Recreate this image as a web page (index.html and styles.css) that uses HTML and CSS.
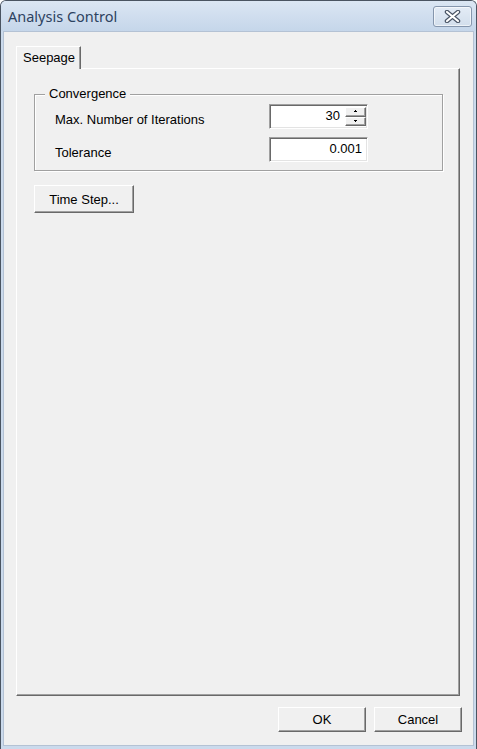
FILE: index.html
```html
<!DOCTYPE html>
<html lang="en">
    <head>
        <meta charset="UTF-8">
        <title>Analysis Control</title>
        <link rel="stylesheet" href="styles.css">
    </head>
    <body>

        <div class="window">
            <div class="titlebar">
                <span class="title">Analysis Control</span>
                <div class="close-button">
                    <svg width="17" height="13" viewBox="0 0 17 13">
                        <path d="M3 2 L14 11 M14 2 L3 11" stroke="#4a5566" stroke-width="4.5" stroke-linecap="round"/>
                        <path d="M3 2 L14 11 M14 2 L3 11" stroke="#ffffff" stroke-width="2.2" stroke-linecap="round"/>
                    </svg>
                </div>
            </div>

            <div class="client">
                <div class="tabs">
                    <div class="tab">Seepage</div>
                </div>

                <div class="tab-panel">
                    <div class="group">
                        <span class="group-title">Convergence</span>
                        <div class="group-rows">
                            <div class="row">
                                <span class="row-label">Max. Number of Iterations</span>
                                <div class="edit">
                                    <span class="edit-value">30</span>
                                    <div class="spinner">
                                        <div class="spin-button">
                                            <svg width="5" height="3" viewBox="0 0 5 3"><path d="M2 0 H3 V1 H4 V2 H1 V1 H2 Z" fill="#000"/></svg>
                                        </div>
                                        <div class="spin-button">
                                            <svg width="5" height="3" viewBox="0 0 5 3"><path d="M1 0 H4 V1 H3 V2 H2 V1 H1 Z" fill="#000"/></svg>
                                        </div>
                                    </div>
                                </div>
                            </div>
                            <div class="row">
                                <span class="row-label">Tolerance</span>
                                <div class="edit">
                                    <span class="edit-value">0.001</span>
                                </div>
                            </div>
                        </div>
                    </div>

                    <button class="push-button time-step">Time Step...</button>
                </div>

                <div class="dialog-buttons">
                    <button class="push-button">OK</button>
                    <button class="push-button">Cancel</button>
                </div>
            </div>
        </div>

    </body>
</html>
```

FILE: styles.css
```css
body {
    margin: 0;
    background-color: #ffffff;
    font-family: "Liberation Sans", Arial, sans-serif;
    font-size: 13px;
    color: #000;
}

.window {
    box-sizing: border-box;
    width: 477px;
    height: 749px;
    display: flex;
    flex-direction: column;
    background-color: #cbdaec;
    border: 1px solid #4a5461;
    border-bottom: none;
    border-radius: 6px 6px 0 0;
    overflow: hidden;
}

.titlebar {
    height: 30px;
    flex: 0 0 30px;
    display: flex;
    align-items: flex-start;
    justify-content: space-between;
    background: linear-gradient(#dbe6f3, #c5d6ea);
}

.title {
    margin: 5px 0 0 7px;
    font-family: "Noto Sans", "Open Sans", sans-serif;
    font-size: 14.5px;
    line-height: 20px;
    color: #2d4260;
}

.close-button {
    box-sizing: border-box;
    width: 39px;
    height: 21px;
    margin: 5px 4px 0 0;
    display: flex;
    align-items: center;
    justify-content: center;
    border: 1px solid #8596ad;
    border-radius: 3px;
    background: linear-gradient(#e4ecf6, #d2deec);
    box-shadow: inset 0 0 0 1px rgba(255, 255, 255, 0.6);
}

.client {
    box-sizing: border-box;
    flex: 1;
    margin: 0 2px 3px 2px;
    padding: 14px 11px 0 12px;
    display: flex;
    flex-direction: column;
    background-color: #f0f0f0;
    border: 1px solid #b4c2d4;
}

.tabs {
    display: flex;
    height: 22px;
}

.tab {
    box-sizing: border-box;
    width: 65px;
    height: 23px;
    padding: 3px 0 0 6px;
    background-color: #f0f0f0;
    border-top: 1px solid #ffffff;
    border-left: 1px solid #ffffff;
    border-right: 1px solid #696969;
    box-shadow: inset -1px 0 0 #a0a0a0;
    position: relative;
    z-index: 1;
}

.tab-panel {
    box-sizing: border-box;
    width: 444px;
    height: 628px;
    padding: 25px 0 0 17px;
    border-top: 1px solid #ffffff;
    border-left: 1px solid #ffffff;
    border-right: 1px solid #696969;
    border-bottom: 1px solid #696969;
    box-shadow: inset -1px -1px 0 #a0a0a0;
}

.group {
    box-sizing: border-box;
    width: 409px;
    height: 77px;
    border: 1px solid #a0a0a0;
    box-shadow: inset 1px 1px 0 #ffffff, 1px 1px 0 #ffffff;
}

.group-title {
    display: table;
    height: 16px;
    line-height: 16px;
    margin: -9px 0 0 10px;
    padding: 0 4px;
    background-color: #f0f0f0;
}

.group-rows {
    margin-top: 2px;
    display: flex;
    flex-direction: column;
    gap: 8px;
}

.row {
    display: flex;
    align-items: center;
    height: 25px;
}

.row-label {
    box-sizing: border-box;
    width: 234px;
    padding: 5px 0 0 20px;
}

.edit {
    box-sizing: border-box;
    width: 99px;
    height: 25px;
    display: flex;
    align-items: stretch;
    background-color: #ffffff;
    border-top: 1px solid #a0a0a0;
    border-left: 1px solid #a0a0a0;
    border-right: 1px solid #ffffff;
    border-bottom: 1px solid #ffffff;
    box-shadow: inset 1px 1px 0 #696969, inset -1px -1px 0 #e3e3e3;
}

.edit-value {
    flex: 1;
    padding: 3px 5px 0 0;
    text-align: right;
}

.spinner {
    width: 21px;
    padding: 2px 1px 2px 0;
    display: flex;
    flex-direction: column;
}

.spin-button {
    flex: 1;
    display: flex;
    align-items: center;
    justify-content: center;
    background-color: #f0f0f0;
    border-top: 1px solid #ffffff;
    border-left: 1px solid #ffffff;
    border-right: 1px solid #696969;
    border-bottom: 1px solid #696969;
    box-shadow: inset -1px -1px 0 #a0a0a0;
}

.push-button {
    box-sizing: border-box;
    height: 25px;
    padding: 0;
    font-family: "Liberation Sans", Arial, sans-serif;
    font-size: 13px;
    color: #000;
    background-color: #f0f0f0;
    border-top: 1px solid #ffffff;
    border-left: 1px solid #ffffff;
    border-right: 1px solid #696969;
    border-bottom: 1px solid #696969;
    box-shadow: inset -1px -1px 0 #a0a0a0;
    border-radius: 0;
}

.time-step {
    display: block;
    width: 100px;
    height: 28px;
    margin-top: 14px;
}

.dialog-buttons {
    display: flex;
    justify-content: flex-end;
    gap: 8px;
    margin-top: 11px;
}

.dialog-buttons .push-button {
    width: 88px;
}
```
